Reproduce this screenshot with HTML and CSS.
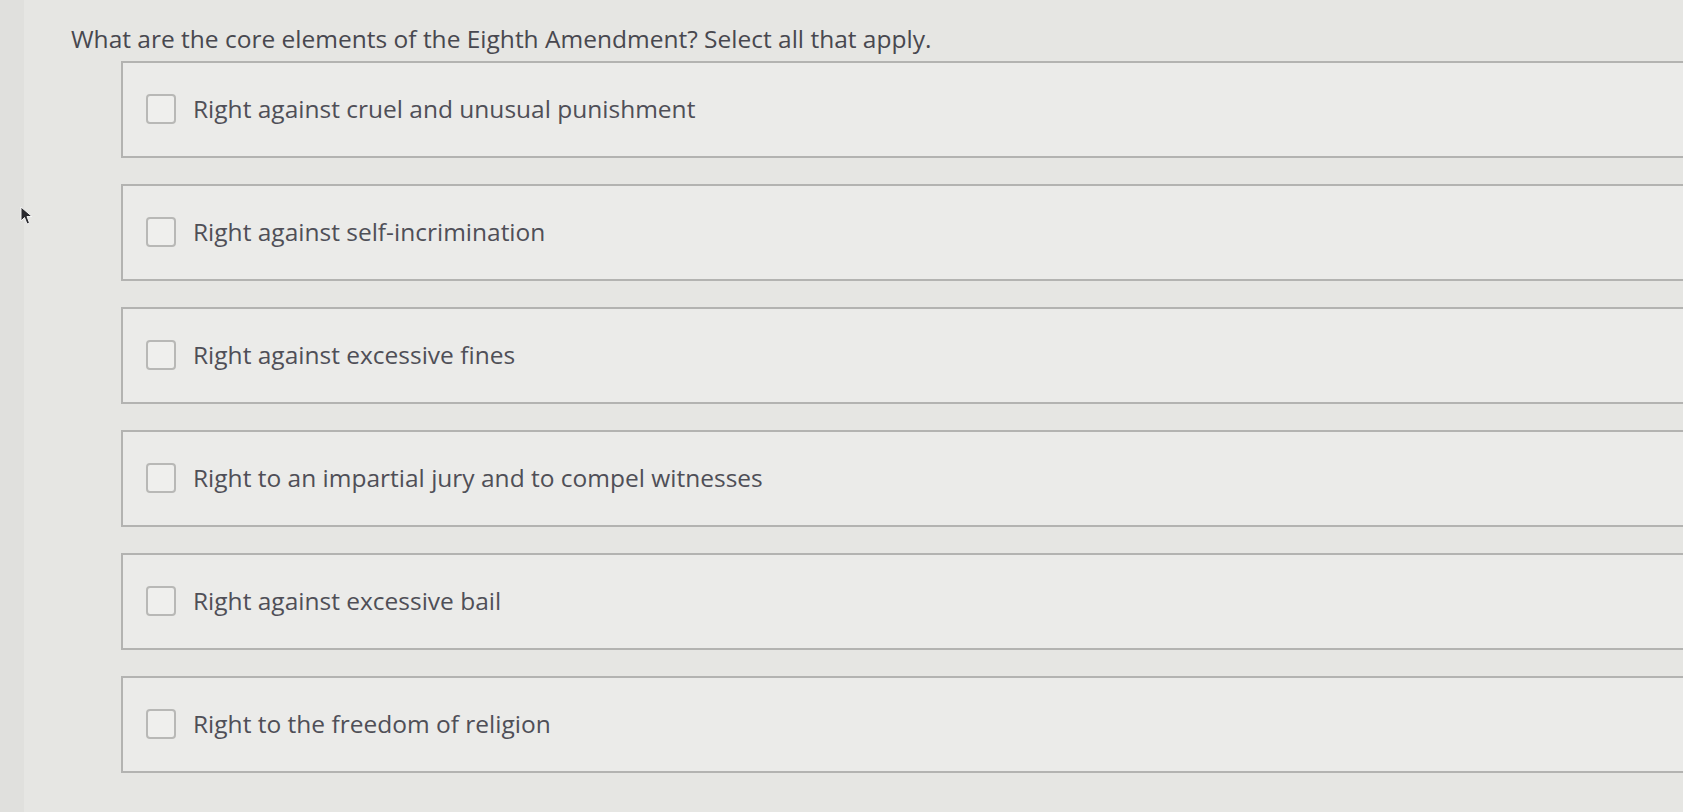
FILE: index.html
```html
<!DOCTYPE html>
<html lang="en">
<head>
<meta charset="utf-8">
<title>Eighth Amendment</title>
<link rel="stylesheet" href="styles.css">
</head>
<body>
<div class="edge"></div>
<svg class="cursor" width="14" height="20" viewBox="0 0 14 20"><path d="M1 1 L1 15 L4.5 11.5 L7 18 L9.5 17 L7 10.5 L12 10.5 Z" fill="#2a2a2e" stroke="#f4f4f4" stroke-width="1"/></svg>
<main class="page">
  <h1 class="question">What are the core elements of the Eighth Amendment? Select all that apply.</h1>
  <div class="options">
    <label class="option"><span class="check"></span><span class="label">Right against cruel and unusual punishment</span></label>
    <label class="option"><span class="check"></span><span class="label">Right against self-incrimination</span></label>
    <label class="option"><span class="check"></span><span class="label">Right against excessive fines</span></label>
    <label class="option"><span class="check"></span><span class="label">Right to an impartial jury and to compel witnesses</span></label>
    <label class="option"><span class="check"></span><span class="label">Right against excessive bail</span></label>
    <label class="option"><span class="check"></span><span class="label">Right to the freedom of religion</span></label>
  </div>
</main>
</body>
</html>
```
FILE: styles.css
```css
html, body {
  margin: 0;
  padding: 0;
}
body {
  background: #e6e6e3;
  font-family: "Open Sans", "Liberation Sans", sans-serif;
  color: #4f4f56;
  overflow: hidden;
  height: 812px;
  position: relative;
}
.edge {
  position: absolute;
  left: 0;
  top: 0;
  width: 24px;
  height: 812px;
  background: #e0e0dd;
}
.cursor {
  position: absolute;
  left: 20px;
  top: 206px;
}
.page {
  padding: 24px 0 0 71px;
}
.question {
  margin: 0;
  font-size: 24.5px;
  line-height: 30px;
  font-weight: 400;
  color: #48484f;
}
.options {
  display: flex;
  flex-direction: column;
  gap: 26px;
  margin: 7px -10px 0 50px;
}
.option {
  box-sizing: border-box;
  display: flex;
  align-items: center;
  gap: 17px;
  height: 97px;
  padding: 0 0 2px 23px;
  border: 2px solid #b3b3b1;
  border-right: none;
  background: #ebebe9;
}
.check {
  width: 30px;
  height: 30px;
  box-sizing: border-box;
  border: 2px solid #b8b8b6;
  border-radius: 4px;
  background: #efefed;
  flex: none;
}
.label {
  font-size: 24.5px;
  line-height: 32px;
  color: #4f4f57;
}
```
